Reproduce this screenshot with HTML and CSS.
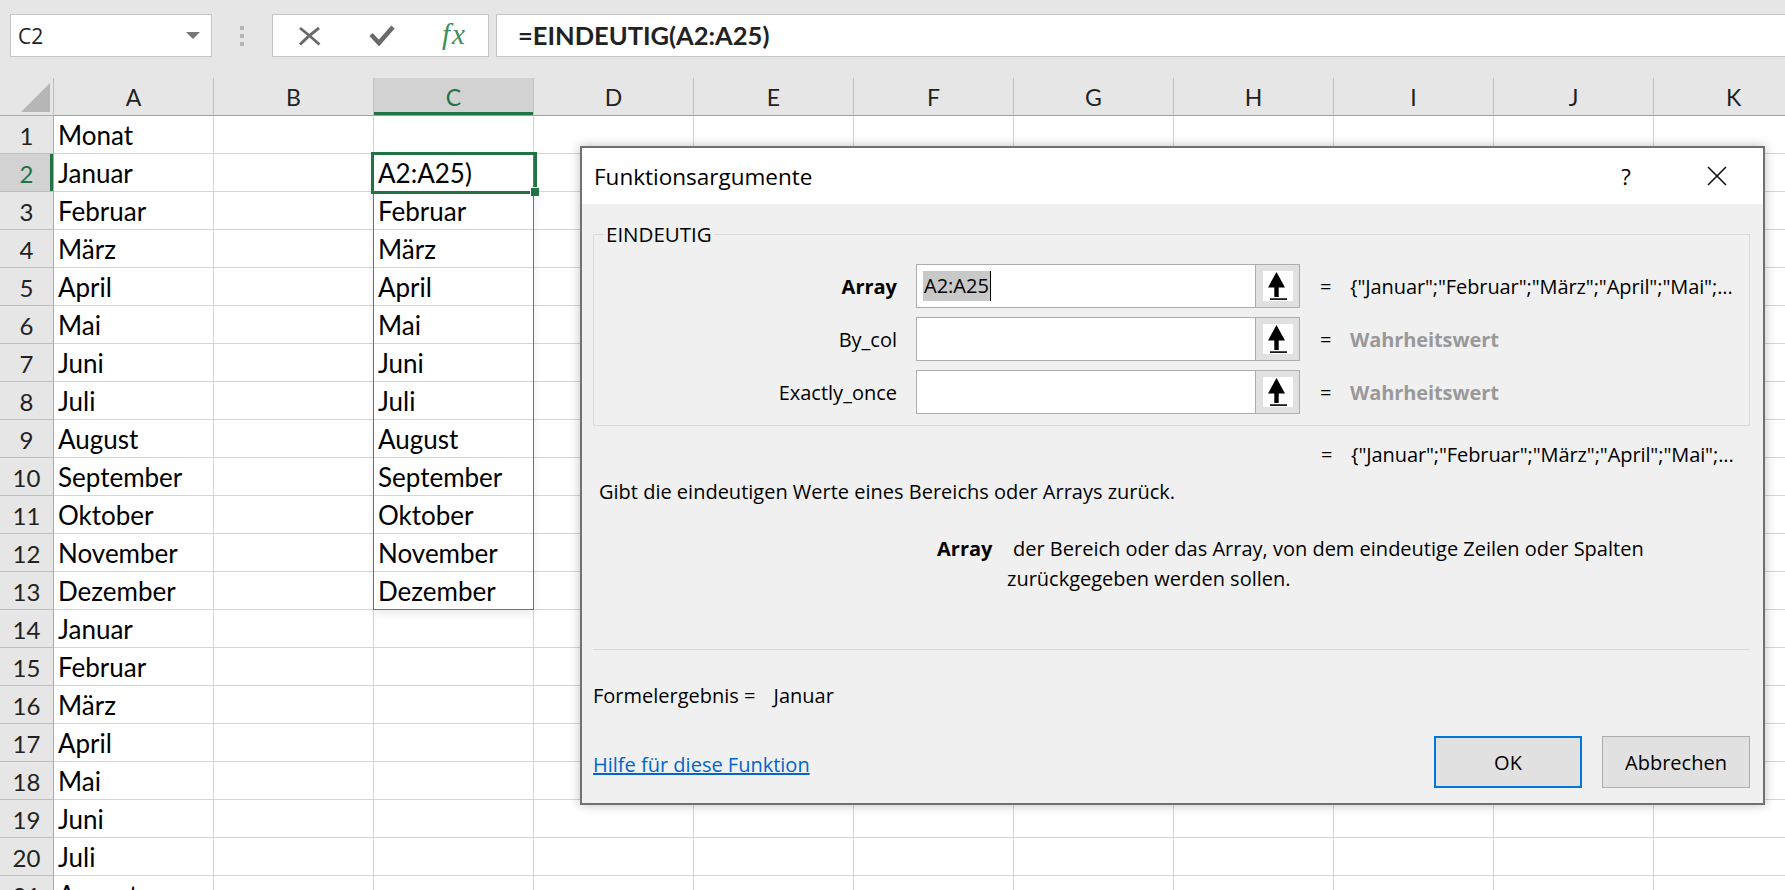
FILE: index.html
```html
<!DOCTYPE html>
<html>
<head>
  <meta charset="utf-8">
  <title>Funktionsargumente</title>
  <link rel="stylesheet" href="styles.css">
</head>
<body>

<div class="formula-bar">
  <div class="name-box">
    <span>C2</span>
    <span class="drop"></span>
  </div>
  <div class="grip"><i></i><i></i><i></i></div>
  <div class="fx-buttons">
    <svg class="ico-cancel" width="23" height="20" viewBox="0 0 23 20">
      <path d="M2 2 Q11 9 21.5 18.5 M21 2 Q10 10 2 18.5" fill="none" stroke="#6a6a6a" stroke-width="2.8"/>
    </svg>
    <svg class="ico-enter" width="26" height="21" viewBox="0 0 26 21">
      <polyline points="2,9.5 10,18 24,2" fill="none" stroke="#6a6a6a" stroke-width="4.6"/>
    </svg>
    <span class="fx">fx</span>
  </div>
  <div class="formula-input">=EINDEUTIG(A2:A25)</div>
</div>

<div class="sheet" id="sheet">
  <!-- selection overlays -->
  <div class="spill-range"></div>
  <div class="active-cell"><span class="handle"></span></div>
</div>

<!-- Dialog Funktionsargumente -->
<div class="dialog">
  <div class="dialog-title">
    <span class="title-text">Funktionsargumente</span>
    <span class="title-help">?</span>
    <svg class="title-close" width="20" height="20" viewBox="0 0 20 20">
      <path d="M1 1 L19 19 M19 1 L1 19" stroke="#111" stroke-width="1.6"/>
    </svg>
  </div>

  <div class="dialog-body">
    <fieldset class="args">
      <legend>EINDEUTIG</legend>

      <div class="arg-row">
        <label class="arg-label bold">Array</label>
        <div class="arg-input"><span class="sel-text">A2:A25</span><span class="caret"></span></div>
        <div class="ref-btn"><svg width="30" height="30" viewBox="0 0 30 30"><path d="M13.5 1 L5 16.5 L11.3 16.5 L11.3 26 L15.7 26 L15.7 16.5 L22 16.5 Z" fill="#000"/><rect x="7" y="27.3" width="17" height="1.6" fill="#000"/></svg></div>
        <span class="eq">=</span>
        <span class="arg-value">{"Januar";"Februar";"März";"April";"Mai";...</span>
      </div>

      <div class="arg-row">
        <label class="arg-label">By_col</label>
        <div class="arg-input"></div>
        <div class="ref-btn"><svg width="30" height="30" viewBox="0 0 30 30"><path d="M13.5 1 L5 16.5 L11.3 16.5 L11.3 26 L15.7 26 L15.7 16.5 L22 16.5 Z" fill="#000"/><rect x="7" y="27.3" width="17" height="1.6" fill="#000"/></svg></div>
        <span class="eq">=</span>
        <span class="arg-value hint">Wahrheitswert</span>
      </div>

      <div class="arg-row">
        <label class="arg-label">Exactly_once</label>
        <div class="arg-input"></div>
        <div class="ref-btn"><svg width="30" height="30" viewBox="0 0 30 30"><path d="M13.5 1 L5 16.5 L11.3 16.5 L11.3 26 L15.7 26 L15.7 16.5 L22 16.5 Z" fill="#000"/><rect x="7" y="27.3" width="17" height="1.6" fill="#000"/></svg></div>
        <span class="eq">=</span>
        <span class="arg-value hint">Wahrheitswert</span>
      </div>
    </fieldset>

    <div class="result-row">
      <span class="eq">=</span>
      <span class="arg-value">{"Januar";"Februar";"März";"April";"Mai";...</span>
    </div>

    <div class="summary">Gibt die eindeutigen Werte eines Bereichs oder Arrays zurück.</div>

    <div class="arg-help">
      <span class="bold help-name">Array</span>
      <span class="help-desc">der Bereich oder das Array, von dem eindeutige Zeilen oder Spalten<br>zurückgegeben werden sollen.</span>
    </div>

    <div class="sep"></div>

    <div class="formula-result">Formelergebnis =<span class="result-val">Januar</span></div>

    <div class="dialog-foot">
      <a class="help-link" href="#">Hilfe für diese Funktion</a>
      <button class="btn btn-default">OK</button>
      <button class="btn">Abbrechen</button>
    </div>
  </div>
</div>

<script>
  const colA = ["Monat", "Januar", "Februar", "März", "April", "Mai", "Juni", "Juli",
    "August", "September", "Oktober", "November", "Dezember", "Januar", "Februar",
    "März", "April", "Mai", "Juni", "Juli", "August"];
  const colC = ["", "A2:A25)", "Februar", "März", "April", "Mai", "Juni", "Juli",
    "August", "September", "Oktober", "November", "Dezember"];
  const letters = "ABCDEFGHIJK";

  let html = '<div class="corner"><span></span></div>';
  for (const l of letters) {
    html += '<div class="col-head' + (l === "C" ? " sel" : "") + '">' + l + '</div>';
  }
  for (let r = 1; r <= 21; r++) {
    html += '<div class="row-head' + (r === 2 ? " sel" : "") + '">' + r + '</div>';
    for (let c = 0; c < 11; c++) {
      let text = "";
      if (c === 0) text = colA[r - 1];
      if (c === 2 && colC[r - 1]) text = colC[r - 1];
      html += '<div class="cell">' + text + '</div>';
    }
  }
  document.getElementById("sheet").insertAdjacentHTML("afterbegin", html);
</script>

</body>
</html>
```

FILE: styles.css
```css
* {
  box-sizing: border-box;
}

body {
  margin: 0;
  width: 1785px;
  height: 890px;
  overflow: hidden;
  background: #fff;
  color: #000;
  font-family: Lato, sans-serif;
  position: relative;
}

/* formula bar */
.formula-bar {
  height: 78px;
  background: #e6e6e6;
  display: flex;
  align-items: flex-start;
  padding: 14px 0 0 10px;
}

.name-box {
  width: 202px;
  height: 43px;
  background: #fff;
  border: 1px solid #c6c6c6;
  display: flex;
  align-items: center;
  justify-content: space-between;
  padding: 0 11px 0 7px;
  font: 21px "Open Sans", sans-serif;
  color: #222;
}

.drop {
  width: 0;
  height: 0;
  border-left: 7px solid transparent;
  border-right: 7px solid transparent;
  border-top: 7px solid #777;
}

.grip {
  margin: 12px 0 0 28px;
  display: flex;
  flex-direction: column;
  gap: 4px;
}

.grip i {
  width: 4px;
  height: 4px;
  background: #b4b4b4;
}

.fx-buttons {
  margin-left: 28px;
  width: 217px;
  height: 43px;
  background: #fff;
  border: 1px solid #c6c6c6;
  display: flex;
  align-items: center;
  padding-left: 25px;
}

.ico-enter {
  margin-left: 48px;
}

.fx {
  margin-left: 47px;
  font: italic 29px "Liberation Serif", serif;
  color: #3b8c5a;
  letter-spacing: 2px;
  margin-top: -2px;
}

.formula-input {
  flex: 1;
  margin-left: 7px;
  margin-right: -10px;
  height: 43px;
  background: #fff;
  border: 1px solid #c6c6c6;
  padding-left: 21px;
  font: bold 25.5px Lato, sans-serif;
  line-height: 41px;
  color: #222;
}

/* sheet */
.sheet {
  position: relative;
  display: grid;
  grid-template-columns: 54px repeat(11, 160px);
  grid-auto-rows: 38px;
}

.corner {
  background: #e6e6e6;
  border-right: 1px solid #bdbdbd;
  border-bottom: 1px solid #ababab;
  position: relative;
}

.corner span {
  position: absolute;
  right: 3px;
  bottom: 3px;
  width: 0;
  height: 0;
  border-left: 29px solid transparent;
  border-bottom: 29px solid #b6b6b6;
}

.col-head {
  background: #e6e6e6;
  border-right: 1px solid #c2c2c2;
  border-bottom: 1px solid #9f9f9f;
  text-align: center;
  font-size: 23px;
  line-height: 38px;
  color: #222;
}

.col-head.sel {
  background: #d2d2d2;
  color: #217346;
  box-shadow: inset 0 -3px #217346;
}

.row-head {
  background: #e6e6e6;
  border-right: 1px solid #ababab;
  border-bottom: 1px solid #bdbdbd;
  text-align: center;
  font-size: 24px;
  padding-top: 2px;
  line-height: 35px;
  color: #222;
}

.row-head.sel {
  background: #d2d2d2;
  color: #217346;
  box-shadow: inset -3px 0 #217346;
}

.cell {
  border-right: 1px solid #d4d4d4;
  border-bottom: 1px solid #d4d4d4;
  padding: 2px 0 0 4px;
  font-size: 26px;
  line-height: 35px;
  white-space: nowrap;
}

.spill-range {
  position: absolute;
  left: 373px;
  top: 75px;
  width: 161px;
  height: 457px;
  border: 1px solid #4a74c6;
  box-shadow: 0 4px 8px rgba(0, 0, 0, 0.08);
}

.active-cell {
  position: absolute;
  left: 371px;
  top: 74px;
  width: 166px;
  height: 42px;
  border: 3px solid #217346;
}

.handle {
  position: absolute;
  right: -5px;
  bottom: -5px;
  width: 9px;
  height: 9px;
  background: #217346;
  border: 1px solid #fff;
  border-right: none;
  border-bottom: none;
}

/* dialog */
.dialog {
  position: absolute;
  left: 580px;
  top: 146px;
  width: 1185px;
  height: 659px;
  background: #f0f0f0;
  border: 2px solid #717171;
  box-shadow: 0 0 10px rgba(0, 0, 0, 0.25);
  font-family: "Open Sans", "Noto Sans", sans-serif;
  font-size: 20px;
  color: #000;
}

.dialog-title {
  height: 56px;
  background: #fff;
  display: flex;
  align-items: center;
  padding: 0 36px 0 12px;
}

.title-text {
  flex: 1;
  font-size: 22.5px;
}

.title-help {
  width: 20px;
  text-align: center;
  font-size: 22px;
  margin-right: 71px;
}

.dialog-body {
  padding: 18px 13px 0 11px;
}

.args {
  margin: 0;
  padding: 18px 0 11px 0;
  border: 1px solid #dadada;
}

.args legend {
  margin-left: 10px;
  padding: 0 2px;
  font-size: 20.5px;
  line-height: 24px;
}

.arg-row {
  display: flex;
  align-items: center;
  height: 44px;
  margin-bottom: 9px;
}

.arg-row:last-child {
  margin-bottom: 0;
}

.arg-label {
  width: 303px;
  text-align: right;
  margin-right: 19px;
}

.bold {
  font-weight: bold;
}

.arg-input {
  width: 339px;
  height: 44px;
  background: #fff;
  border: 1px solid #adadad;
  border-right: none;
  display: flex;
  align-items: center;
  padding-left: 6px;
}

.sel-text {
  background: #c8c8c8;
  line-height: 30px;
  padding: 0 1px;
}

.caret {
  width: 1px;
  height: 30px;
  background: #000;
}

.ref-btn {
  width: 45px;
  height: 44px;
  background: #e1e1e1;
  border: 1px solid #adadad;
  display: flex;
  align-items: center;
  justify-content: center;
}

.ref-btn svg {
  background: #fff;
}

.eq {
  margin-left: 20px;
  width: 30px;
}

.arg-value {
  letter-spacing: -0.1px;
}

.hint {
  font-weight: bold;
  color: #999;
}

.result-row {
  margin: 13px 0 0 728px;
  height: 30px;
  display: flex;
  align-items: center;
}

.result-row .eq {
  margin-left: 0;
}

.summary {
  margin: 8px 0 0 6px;
  line-height: 30px;
}

.arg-help {
  margin: 27px 0 0 344px;
  display: flex;
  line-height: 30px;
}

.help-name {
  width: 70px;
}

.help-desc {
  text-indent: 6px;
}

.sep {
  margin-top: 55px;
  border-top: 1px solid #d9d9d9;
}

.formula-result {
  margin-top: 31px;
  line-height: 30px;
}

.result-val {
  margin-left: 18px;
}

.dialog-foot {
  margin-top: 25px;
  display: flex;
  align-items: center;
}

.help-link {
  flex: 1;
  color: #0066cc;
  text-decoration: underline;
  margin-top: 4px;
}

.btn {
  width: 148px;
  height: 52px;
  background: #e1e1e1;
  border: 1px solid #adadad;
  font: 20px "Open Sans", "Noto Sans", sans-serif;
  color: #000;
  margin-left: 20px;
}

.btn-default {
  border: 2px solid #0078d7;
}
```
